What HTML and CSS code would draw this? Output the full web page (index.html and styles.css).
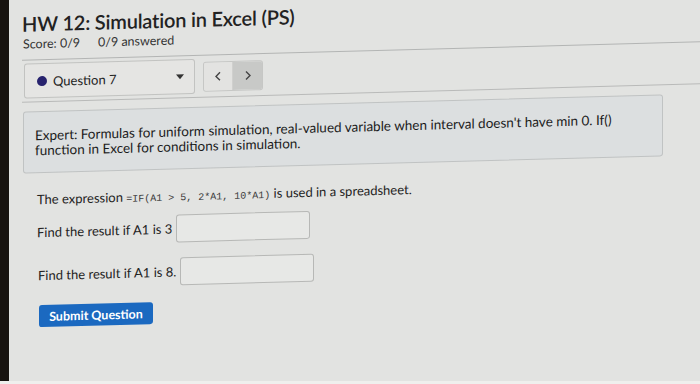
FILE: index.html
```html
<!DOCTYPE html>
<html lang="en">
<head>
  <meta charset="UTF-8">
  <title>HW 12: Simulation in Excel (PS)</title>
  <link rel="stylesheet" href="styles.css">
</head>
<body>
<div class="frame">
  <div class="bezel"></div>
  <div class="screen">
    <div class="page">
      <header class="hw-header">
        <h1 class="hw-title">HW 12: Simulation in Excel (PS)</h1>
        <div class="hw-score">
          <span>Score: 0/9</span>
          <span>0/9 answered</span>
        </div>
      </header>

      <div class="question-nav">
        <div class="question-select">
          <span class="dot"></span>
          <span class="q-label">Question 7</span>
          <span class="caret"></span>
        </div>
        <div class="nav-buttons">
          <button class="nav-btn prev">
            <svg width="6" height="10" viewBox="0 0 6 10"><polyline points="5,1 1,5 5,9" fill="none" stroke="#444" stroke-width="1.4"/></svg>
          </button>
          <button class="nav-btn next">
            <svg width="6" height="10" viewBox="0 0 6 10"><polyline points="1,1 5,5 1,9" fill="none" stroke="#444" stroke-width="1.4"/></svg>
          </button>
        </div>
      </div>

      <div class="info-box">
        Expert: Formulas for uniform simulation, real-valued variable when interval doesn't have min 0. If()
        function in Excel for conditions in simulation.
      </div>

      <div class="question-body">
        <p class="prompt">The expression <code>=IF(A1 &gt; 5, 2*A1, 10*A1)</code> is used in a spreadsheet.</p>
        <div class="answer-row">
          <label>Find the result if A1 is 3</label>
          <input type="text" class="answer">
        </div>
        <div class="answer-row second">
          <label>Find the result if A1 is 8.</label>
          <input type="text" class="answer">
        </div>
        <button class="submit-btn">Submit Question</button>
      </div>
    </div>
  </div>
</div>
</body>
</html>
```

FILE: styles.css
```css
* {
  margin: 0;
  padding: 0;
  box-sizing: border-box;
}

body {
  width: 700px;
  height: 384px;
  overflow: hidden;
  background-color: #efefed;
  font-family: Lato, 'Open Sans', sans-serif;
  color: #222;
}

.frame {
  display: flex;
  height: 381px;
}

.bezel {
  width: 9px;
  background-color: #17130f;
}

.screen {
  flex: 1;
  overflow: hidden;
  background-color: #e2e3e1;
}

/* the photo of the screen is slightly skewed */
.page {
  width: 720px;
  padding: 12px 0 0 13px;
  transform: skewY(-1.55deg);
  transform-origin: 0 0;
}

.hw-title {
  font-size: 20px;
  font-weight: 600;
  line-height: 24px;
  letter-spacing: -0.2px;
  color: #222;
}

.hw-score {
  display: flex;
  gap: 18px;
  margin-top: 1px;
  padding: 0 0 7px 1px;
  font-size: 12.5px;
  line-height: 16px;
  color: #333;
  border-bottom: 1px solid #b3b5b4;
}

.question-nav {
  display: flex;
  align-items: flex-start;
  gap: 8px;
  margin-top: 3px;
  padding: 0 0 3px 2px;
  border-bottom: 1px solid #b9bab9;
}

.question-select {
  width: 171px;
  height: 35px;
  display: flex;
  align-items: center;
  padding: 0 10px 0 12px;
  background-color: #e5e5e3;
  border: 1px solid #c2c3c1;
  border-radius: 3px;
  font-size: 13px;
  color: #222;
}

.dot {
  width: 10px;
  height: 10px;
  border-radius: 50%;
  background-color: #27236e;
  margin-right: 6px;
}

.q-label {
  flex: 1;
}

.caret {
  width: 0;
  height: 0;
  border-left: 4px solid transparent;
  border-right: 4px solid transparent;
  border-top: 5px solid #333;
}

.nav-buttons {
  display: flex;
  margin-top: 3px;
  border: 1px solid #c6c7c5;
  border-radius: 3px;
  overflow: hidden;
}

.nav-btn {
  width: 29px;
  height: 28px;
  display: flex;
  align-items: center;
  justify-content: center;
  border: none;
}

.nav-btn.prev {
  background-color: #e3e3e1;
  border-right: 1px solid #d0d0ce;
}

.nav-btn.next {
  background-color: #c8c9c7;
}

.info-box {
  width: 640px;
  margin: 9px 0 0 1px;
  padding: 16px 10px 14px 11px;
  background-color: #dcdfe0;
  border: 1px solid #c0c3c3;
  border-radius: 3px;
  font-size: 13.5px;
  line-height: 15px;
  color: #1b1b1b;
}

.question-body {
  padding: 18px 0 0 15px;
  font-size: 13px;
  line-height: 16px;
  color: #222;
}

.prompt code {
  font-family: 'Liberation Mono', 'DejaVu Sans Mono', monospace;
  font-size: 10px;
  color: #3a3a3a;
}

.answer-row {
  display: flex;
  align-items: center;
  gap: 4px;
  margin-top: 8px;
}

.answer-row.second {
  margin-top: 15px;
  padding-left: 1px;
}

.answer {
  width: 134px;
  height: 28px;
  border: 1px solid #b7b8b6;
  border-radius: 3px;
  background-color: #e7e8e6;
}

.submit-btn {
  width: 114px;
  height: 22px;
  margin: 16px 0 0 2px;
  background-color: #1b69c0;
  color: #fff;
  border: none;
  border-radius: 3px;
  font-family: inherit;
  font-size: 12.5px;
  font-weight: 700;
}
```
